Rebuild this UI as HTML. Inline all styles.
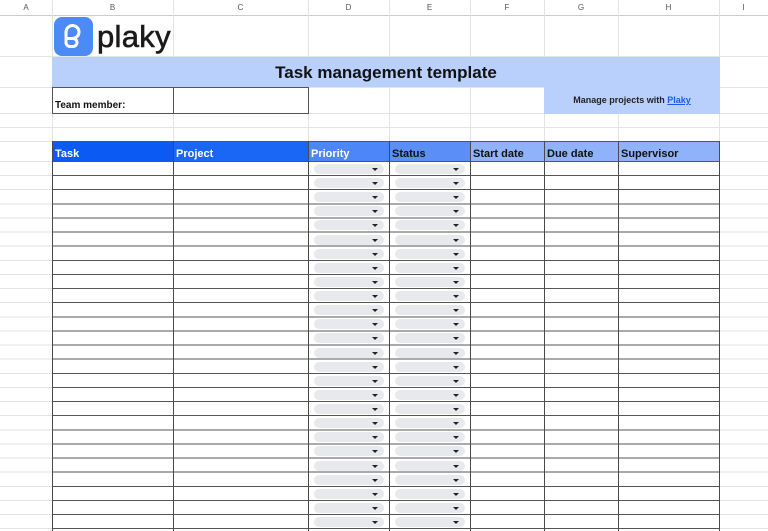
<!DOCTYPE html>
<html><head><meta charset="utf-8"><style>
*{margin:0;padding:0;box-sizing:border-box}
body{width:768px;height:531px;overflow:hidden;background:#fff;position:relative;font-family:"Liberation Sans",sans-serif}
.a{position:absolute}
.hl{position:absolute;left:0;width:768px;height:1px;background:#e2e3e3}
.vl{position:absolute;top:0;width:1px;height:531px;background:#e2e3e3}
.ch{position:absolute;top:0;height:16px;font-size:8px;color:#555;line-height:16px;text-align:center}
.dv{position:absolute;width:1px;background:#4a4a4a}
.th{position:absolute;top:142px;height:19px;color:#fff;font-weight:bold;font-size:11px;line-height:24px;padding-left:3px}
.dd{position:absolute;height:10px;border-radius:5px;background:#e8e9ec}
.dd:after{content:"";position:absolute;right:6px;top:4px;border-left:3px solid transparent;border-right:3px solid transparent;border-top:3px solid #222}
</style></head><body>
<div class="a" style="left:0;top:0;width:768px;height:16px;background:#fff;border-bottom:1px solid #ccc"></div>
<div class="ch" style="left:0;width:52px">A</div>
<div class="ch" style="left:52px;width:121px">B</div>
<div class="ch" style="left:173px;width:135px">C</div>
<div class="ch" style="left:308px;width:81px">D</div>
<div class="ch" style="left:389px;width:81px">E</div>
<div class="ch" style="left:470px;width:74px">F</div>
<div class="ch" style="left:544px;width:74px">G</div>
<div class="ch" style="left:618px;width:101px">H</div>
<div class="ch" style="left:719px;width:49px">I</div>
<div class="vl" style="left:52px"></div><div class="vl" style="left:173px"></div><div class="vl" style="left:308px"></div><div class="vl" style="left:389px"></div><div class="vl" style="left:470px"></div><div class="vl" style="left:544px"></div><div class="vl" style="left:618px"></div><div class="vl" style="left:719px"></div>
<div class="hl" style="top:56px"></div><div class="hl" style="top:87px"></div><div class="hl" style="top:113px"></div><div class="hl" style="top:127px"></div><div class="hl" style="top:141px"></div>
<div class="a" style="left:0;top:161px;width:768px;height:370px;background:repeating-linear-gradient(to bottom,#e2e3e3 0 1px,transparent 1px 14.12px)"></div>
<!-- logo -->
<div class="a" style="left:53px;top:17px;width:120px;height:39px;background:#fff"></div>
<div class="a" style="left:54px;top:17px;width:39px;height:39px;border-radius:8px;background:#4c8bf5"></div>
<svg class="a" style="left:54px;top:17px" width="39" height="39" viewBox="0 0 39 39"><g fill="none" stroke="#fff" stroke-width="3"><path d="M12 21 V15 a6.5 6.5 0 0 1 13 0 a6.5 6.5 0 0 1 -6.5 6.5 H12 Z"/><path d="M12 21.5 h7 a4 4 0 0 1 0 8 h-3 a4 4 0 0 1 -4 -4 Z"/></g></svg>
<div class="a" style="left:97px;top:17px;font-size:31px;color:#1a1a1a;letter-spacing:0.3px;line-height:40px;-webkit-text-stroke:0.6px #1a1a1a">plaky</div>
<!-- title -->
<div class="a" style="left:52px;top:57px;width:668px;height:30px;background:#b9d0fc;text-align:center;font-weight:bold;font-size:17px;line-height:31px;color:#111">Task management template</div>
<div class="a" style="left:544px;top:87px;width:176px;height:27px;background:#b9d0fc;font-size:9px;font-weight:bold;text-align:center;line-height:27px;color:#222">Manage projects with <span style="color:#1a5ce8;text-decoration:underline">Plaky</span></div>
<div class="a" style="left:52px;top:87px;width:257px;height:27px;border:1px solid #555;background:#fff"></div>
<div class="a" style="left:173px;top:87px;width:1px;height:27px;background:#555"></div>
<div class="a" style="left:55px;top:100px;font-size:10px;font-weight:bold;color:#111;line-height:12px">Team member:</div>
<!-- table -->
<div class="a" style="left:52px;top:161px;width:668px;height:370px;background:#fff repeating-linear-gradient(to bottom,#555 0 1px,transparent 1px 14.12px)"></div>
<div class="th" style="left:52px;width:121px;background:#0a5af3">Task</div>
<div class="th" style="left:173px;width:135px;background:#1a66f5">Project</div>
<div class="th" style="left:308px;width:81px;background:#4d86f6">Priority</div>
<div class="th" style="left:389px;width:81px;background:#5b8ff7;color:#111">Status</div>
<div class="th" style="left:470px;width:74px;background:#8fb2fa;color:#111">Start date</div>
<div class="th" style="left:544px;width:74px;background:#8fb2fa;color:#111">Due date</div>
<div class="th" style="left:618px;width:101px;background:#8fb2fa;color:#111">Supervisor</div>
<div class="a" style="left:52px;top:141px;width:668px;height:1px;background:#555"></div>
<div class="dv" style="left:52px;top:141px;height:390px"></div><div class="dv" style="left:173px;top:141px;height:390px"></div><div class="dv" style="left:308px;top:141px;height:390px"></div><div class="dv" style="left:389px;top:141px;height:390px"></div><div class="dv" style="left:470px;top:141px;height:390px"></div><div class="dv" style="left:544px;top:141px;height:390px"></div><div class="dv" style="left:618px;top:141px;height:390px"></div><div class="dv" style="left:719px;top:141px;height:390px"></div>
<div id="dd"></div>
<script>
var h='';for(var i=0;i<26;i++){var t=(164+i*14.12).toFixed(2);h+='<div class="dd" style="left:314px;width:70px;top:'+t+'px"></div><div class="dd" style="left:395px;width:70px;top:'+t+'px"></div>';}
document.getElementById('dd').innerHTML=h;
</script>
</body></html>
